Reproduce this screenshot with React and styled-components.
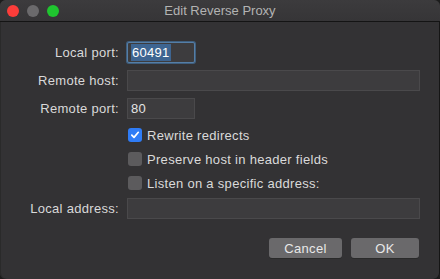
import React from "react";
import styled, { createGlobalStyle } from "styled-components";

const GlobalStyle = createGlobalStyle`
  html, body {
    margin: 0;
    padding: 0;
    background: #1c1c1c;
  }
  * {
    box-sizing: border-box;
  }
`;

const Window = styled.div`
  width: 440px;
  height: 279px;
  background: #333234;
  border-radius: 6px;
  overflow: hidden;
  box-shadow: inset -1px 0 0 #151515, inset 1px 0 0 #2a2a2a;
  font-family: "Liberation Sans", Arial, sans-serif;
  font-size: 13px;
  letter-spacing: 0.3px;
  color: #dcdcdc;
  display: flex;
  flex-direction: column;
`;

const TitleBar = styled.div`
  height: 22px;
  flex-shrink: 0;
  background: linear-gradient(#3c3b3d, #363537);
  border-bottom: 1px solid #141414;
  display: flex;
  align-items: center;
  position: relative;
  padding-left: 7px;
  gap: 8px;
`;

const Light = styled.span`
  width: 12px;
  height: 12px;
  border-radius: 50%;
  background: ${(p) => p.color};
`;

const Title = styled.div`
  position: absolute;
  left: 0;
  right: 0;
  top: 0;
  bottom: 0;
  display: flex;
  align-items: center;
  justify-content: center;
  color: #b3b3b3;
  font-size: 13px;
  letter-spacing: 0;
  pointer-events: none;
`;

const Body = styled.div`
  padding: 20px 20px 0 0;
  display: flex;
  flex-direction: column;
`;

const Row = styled.div`
  display: flex;
  align-items: center;
  height: ${(p) => p.h || 21}px;
  margin-top: ${(p) => p.mt || 0}px;
`;

const Label = styled.label`
  width: 119px;
  text-align: right;
  margin-right: 8px;
  flex-shrink: 0;
  color: #d9d9d9;
`;

const Field = styled.div`
  height: 21px;
  width: ${(p) => (p.w ? `${p.w}px` : "auto")};
  flex: ${(p) => (p.w ? "0 0 auto" : "1")};
  background: #3d3c3e;
  border: 1px solid ${(p) => (p.focused ? "#557ea6" : "#4a494b")};
  box-shadow: ${(p) => (p.focused ? "0 0 0 1px #3f5f7f" : "none")};
  border-radius: ${(p) => (p.focused ? "2px" : "0")};
  display: flex;
  align-items: center;
  padding-left: 3px;
  color: #e4e4e4;
`;

const Selected = styled.span`
  background: #3e6591;
  color: #ffffff;
  padding: 1px 1px;
`;

const CheckRow = styled.div`
  display: flex;
  align-items: center;
  height: 14px;
  margin-top: ${(p) => p.mt || 0}px;
  padding-left: 128px;
  gap: 5px;
  color: #dadada;
`;

const Box = styled.span`
  width: 14px;
  height: 14px;
  border-radius: 3px;
  background: ${(p) => (p.checked ? "#2f7cf6" : "#5c5b5d")};
  display: flex;
  align-items: center;
  justify-content: center;
  flex-shrink: 0;
`;

const Buttons = styled.div`
  display: flex;
  justify-content: flex-end;
  gap: 9px;
  margin-top: 19px;
  padding-right: 1px;
`;

const Button = styled.button`
  height: 20px;
  width: ${(p) => p.w}px;
  background: #6a696b;
  border: none;
  border-radius: 3px;
  color: #e8e8e8;
  font-family: "Liberation Sans", Arial, sans-serif;
  font-size: 13px;
  letter-spacing: 0.3px;
  padding: 0;
  box-shadow: 0 1px 0 #2a2a2a;
`;

const Check = ({ checked, children, mt }) => (
  <CheckRow mt={mt}>
    <Box checked={checked}>
      {checked && (
        <svg width="10" height="10" viewBox="0 0 10 10">
          <path
            d="M1.8 5.2 L4 7.4 L8.3 2.3"
            fill="none"
            stroke="#fff"
            strokeWidth="1.7"
            strokeLinecap="round"
            strokeLinejoin="round"
          />
        </svg>
      )}
    </Box>
    {children}
  </CheckRow>
);

export default function App() {
  return (
    <>
      <GlobalStyle />
      <Window>
        <TitleBar>
          <Light color="#fc3d3a" />
          <Light color="#6b6a6c" />
          <Light color="#1fc52f" />
          <Title>Edit Reverse Proxy</Title>
        </TitleBar>
        <Body>
          <Row>
            <Label>Local port:</Label>
            <Field w={68} focused>
              <Selected>60491</Selected>
            </Field>
          </Row>
          <Row mt={7}>
            <Label>Remote host:</Label>
            <Field />
          </Row>
          <Row mt={7}>
            <Label>Remote port:</Label>
            <Field w={68}>80</Field>
          </Row>
          <Check checked mt={9}>
            Rewrite redirects
          </Check>
          <Check mt={10}>Preserve host in header fields</Check>
          <Check mt={10}>Listen on a specific address:</Check>
          <Row mt={8}>
            <Label>Local address:</Label>
            <Field />
          </Row>
          <Buttons>
            <Button w={73}>Cancel</Button>
            <Button w={68}>OK</Button>
          </Buttons>
        </Body>
      </Window>
    </>
  );
}
